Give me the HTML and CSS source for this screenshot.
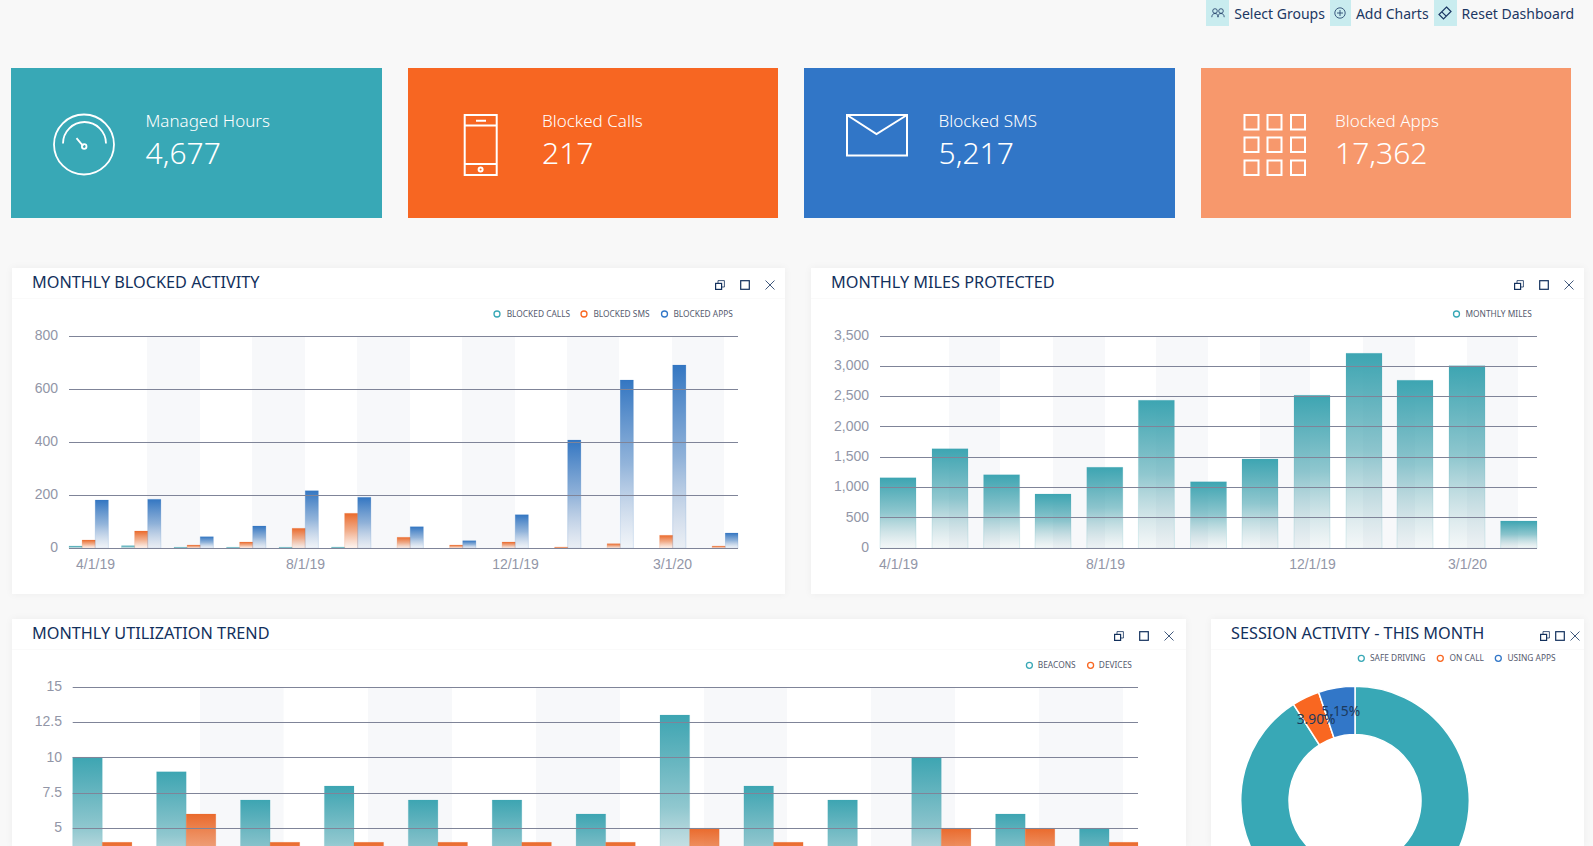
FILE: index.html
```html
<!DOCTYPE html>
<html lang="en">
<head>
<meta charset="utf-8">
<title>Dashboard</title>
<link rel="stylesheet" href="styles.css">
</head>
<body>
<main class="dash">
  <nav class="toolbar">
    <a class="tool"><span class="tool-ico wide"><svg viewBox="0 0 14 10" width="14" height="10"><circle cx="4" cy="3" r="2.3"/><circle cx="10" cy="3" r="2.3"/><path d="M.8 9.2c0-2.4 1.4-3.7 3.2-3.7s3.200 1.300 3.200 3.700M6.800 9.200c0-2.400 1.400-3.700 3.200-3.700s3.200 1.300 3.200 3.700"/></svg></span><span class="tool-label">Select Groups</span></a>
    <a class="tool"><span class="tool-ico"><svg viewBox="0 0 12 12" width="12" height="12"><circle cx="6" cy="6" r="5.2"/><path d="M6 3v6M3 6h6"/></svg></span><span class="tool-label">Add Charts</span></a>
    <a class="tool"><span class="tool-ico wide"><svg viewBox="0 0 14 14" width="14" height="14" class="strong"><path d="M8.500 1 13 5.500 5.500 13 1 8.500ZM3.800 5.800 8.200 10.200"/></svg></span><span class="tool-label">Reset Dashboard</span></a>
  </nav>

  <section class="cards">
    <article class="card teal">
      <svg class="card-ico" viewBox="0 0 62 62" width="62" height="62"><circle cx="31" cy="30.500" r="30"/><path d="M10 29.500A21.500 21.500 0 0 1 53 29.500M23.500 24.200 30.200 32.200"/><circle cx="31.200" cy="32.500" r="2.300"/></svg>
      <div class="card-text"><div class="card-label">Managed Hours</div><div class="card-value">4,677</div></div>
    </article>
    <article class="card orange">
      <svg class="card-ico" viewBox="0 0 62 62" width="62" height="62"><rect x="14.700" y="1" width="32" height="60"/><path d="M14.700 11.500H46.700M14.700 50H46.700M26 6.800H36"/><circle cx="30.600" cy="55.500" r="2"/></svg>
      <div class="card-text"><div class="card-label">Blocked Calls</div><div class="card-value">217</div></div>
    </article>
    <article class="card blue">
      <svg class="card-ico" viewBox="0 0 62 62" width="62" height="62"><rect x="1" y="1" width="60" height="40.500"/><path d="M1 1 30.500 20 61 1"/></svg>
      <div class="card-text"><div class="card-label">Blocked SMS</div><div class="card-value">5,217</div></div>
    </article>
    <article class="card peach">
      <svg class="card-ico" viewBox="0 0 62 62" width="62" height="62"><rect x="1.500" y="1" width="14" height="14.500"/><rect x="24.500" y="1" width="14" height="14.500"/><rect x="48" y="1" width="14" height="14.500"/><rect x="1.500" y="23.500" width="14" height="14.500"/><rect x="24.500" y="23.500" width="14" height="14.500"/><rect x="48" y="23.500" width="14" height="14.500"/><rect x="1.500" y="46.500" width="14" height="14.500"/><rect x="24.500" y="46.500" width="14" height="14.500"/><rect x="48" y="46.500" width="14" height="14.500"/></svg>
      <div class="card-text"><div class="card-label">Blocked Apps</div><div class="card-value">17,362</div></div>
    </article>
  </section>

  <section class="row-two">
    <article class="panel">
      <header class="panel-head">
        <h2>MONTHLY BLOCKED ACTIVITY</h2>
        <div class="actions">
          <svg viewBox="0 0 10 10" width="10" height="10"><rect x=".6" y="3.400" width="6" height="6"/><path class="thin" d="M3 3.400V.6H9.400V7H6.600"/></svg>
          <svg viewBox="0 0 10 10" width="10" height="10"><rect x=".7" y=".7" width="8.600" height="8.600"/></svg>
          <svg viewBox="0 0 10 10" width="10" height="10"><path class="thin" d="M.5.5 9.500 9.500M9.500.5.500 9.500"/></svg>
        </div>
      </header>
      <svg class="chart" viewBox="12 299 773 295" width="773" height="295">
        <defs>
          <linearGradient id="gT" x1="0" y1="0" x2="0" y2="1"><stop offset="0" stop-color="#3da5b2"/><stop offset=".5" stop-color="#3f9fac" stop-opacity=".58"/><stop offset="1" stop-color="#8fb4bd" stop-opacity=".1"/></linearGradient>
          <linearGradient id="gO" x1="0" y1="0" x2="0" y2="1"><stop offset="0" stop-color="#ea6a2c"/><stop offset=".5" stop-color="#e9783f" stop-opacity=".6"/><stop offset="1" stop-color="#ea8a5c" stop-opacity=".08"/></linearGradient>
          <linearGradient id="gB" x1="0" y1="0" x2="0" y2="1"><stop offset="0" stop-color="#3376c2"/><stop offset=".5" stop-color="#4a82c2" stop-opacity=".6"/><stop offset="1" stop-color="#8aa6cc" stop-opacity=".12"/></linearGradient>
        </defs>
        <g class="bands"><rect x="147" y="336" width="53" height="212"/><rect x="252" y="336" width="53" height="212"/><rect x="357" y="336" width="53" height="212"/><rect x="462" y="336" width="53" height="212"/><rect x="567" y="336" width="52" height="212"/><rect x="672" y="336" width="52" height="212"/></g>
        <g class="bars teal-edge" fill="url(#gT)">
          <path d="M69 546V548.300H82.100V546Z"/><path d="M121.500 545.700V548.300H134.600V545.700Z"/><path d="M174 547.300V548.300H187.100V547.300Z"/><path d="M226.500 547.300V548.300H239.600V547.300Z"/><path d="M279 547.300V548.300H292.100V547.300Z"/><path d="M331.500 547V548.300H344.600V547Z"/>
        </g>
        <g class="bars orange-edge" fill="url(#gO)">
          <path d="M82.100 540V548.300H95.200V540Z"/><path d="M134.600 531V548.300H147.700V531Z"/><path d="M187.100 545V548.300H200.200V545Z"/><path d="M239.600 542V548.300H252.700V542Z"/><path d="M292.100 528.300V548.300H305.200V528.300Z"/><path d="M344.600 513.300V548.300H357.700V513.300Z"/><path d="M397.100 537.300V548.300H410.200V537.300Z"/><path d="M449.600 545V548.300H462.700V545Z"/><path d="M502.100 542V548.300H515.200V542Z"/><path d="M554.600 547V548.300H567.700V547Z"/><path d="M607.100 543.700V548.300H620.200V543.700Z"/><path d="M659.600 535.300V548.300H672.700V535.300Z"/><path d="M712.100 546V548.300H725.200V546Z"/>
        </g>
        <g class="bars blue-edge" fill="url(#gB)">
          <path d="M95.200 500V548.300H108.400V500Z"/><path d="M147.700 499.300V548.300H160.900V499.300Z"/><path d="M200.200 536.700V548.300H213.400V536.700Z"/><path d="M252.700 526V548.300H265.900V526Z"/><path d="M305.200 490.700V548.300H318.400V490.700Z"/><path d="M357.700 497.300V548.300H370.900V497.300Z"/><path d="M410.200 526.700V548.300H423.400V526.700Z"/><path d="M462.700 540.700V548.300H475.900V540.700Z"/><path d="M515.200 514.700V548.300H528.400V514.700Z"/><path d="M567.700 440V548.300H580.900V440Z"/><path d="M620.200 380V548.300H633.400V380Z"/><path d="M672.700 365V548.300H685.900V365Z"/><path d="M725.200 533V548.300H738V533Z"/>
        </g>
        <g class="grid"><path d="M69 336.500H738M69 389.500H738M69 442.500H738M69 495.500H738M69 548.500H738"/></g>
        <g class="axis end"><text x="58" y="340">800</text><text x="58" y="393">600</text><text x="58" y="446">400</text><text x="58" y="499">200</text><text x="58" y="552">0</text></g>
        <g class="axis mid"><text x="95.500" y="569">4/1/19</text><text x="305.500" y="569">8/1/19</text><text x="515.500" y="569">12/1/19</text><text x="672.500" y="569">3/1/20</text></g>
        <g class="legend">
          <circle class="c-teal" cx="497" cy="314" r="3"/><text x="506.700" y="317">BLOCKED CALLS</text>
          <circle class="c-orange" cx="584" cy="314" r="3"/><text x="593.400" y="317">BLOCKED SMS</text>
          <circle class="c-blue" cx="664.500" cy="314" r="3"/><text x="673.400" y="317">BLOCKED APPS</text>
        </g>
      </svg>
    </article>

    <article class="panel">
      <header class="panel-head">
        <h2>MONTHLY MILES PROTECTED</h2>
        <div class="actions">
          <svg viewBox="0 0 10 10" width="10" height="10"><rect x=".6" y="3.400" width="6" height="6"/><path class="thin" d="M3 3.400V.6H9.400V7H6.600"/></svg>
          <svg viewBox="0 0 10 10" width="10" height="10"><rect x=".7" y=".7" width="8.600" height="8.600"/></svg>
          <svg viewBox="0 0 10 10" width="10" height="10"><path class="thin" d="M.5.5 9.500 9.500M9.500.5.500 9.500"/></svg>
        </div>
      </header>
      <svg class="chart" viewBox="811 299 773 295" width="773" height="295">
        <g class="bands"><rect x="949" y="336" width="51" height="212"/><rect x="1053" y="336" width="52" height="212"/><rect x="1156" y="336" width="52" height="212"/><rect x="1260" y="336" width="50" height="212"/><rect x="1363" y="336" width="52" height="212"/><rect x="1467" y="336" width="51" height="212"/></g>
        <g class="bars teal-edge" fill="url(#gT)">
          <path d="M880 477.700V548.300H916V477.700Z"/><path d="M932 448.700V548.300H968V448.700Z"/><path d="M983.600 474.700V548.300H1019.600V474.700Z"/><path d="M1035 494V548.300H1071V494Z"/><path d="M1086.800 467.300V548.300H1122.800V467.300Z"/><path d="M1138.400 400.300V548.300H1174.400V400.300Z"/><path d="M1190.500 481.700V548.300H1226.500V481.700Z"/><path d="M1242 459V548.300H1278V459Z"/><path d="M1294 395.300V548.300H1330V395.300Z"/><path d="M1346 353.300V548.300H1382V353.300Z"/><path d="M1397 380.300V548.300H1433V380.300Z"/><path d="M1449 365.700V548.300H1485V365.700Z"/><path d="M1500.600 521V548.300H1537V521Z"/>
        </g>
        <g class="grid"><path d="M880 336.500H1537M880 366.500H1537M880 396.500H1537M880 426.500H1537M880 457.500H1537M880 487.500H1537M880 517.500H1537M880 548.500H1537"/></g>
        <g class="axis end"><text x="869" y="340">3,500</text><text x="869" y="370">3,000</text><text x="869" y="400">2,500</text><text x="869" y="431">2,000</text><text x="869" y="461">1,500</text><text x="869" y="491">1,000</text><text x="869" y="522">500</text><text x="869" y="552">0</text></g>
        <g class="axis mid"><text x="898.500" y="569">4/1/19</text><text x="1105.500" y="569">8/1/19</text><text x="1312.500" y="569">12/1/19</text><text x="1467.500" y="569">3/1/20</text></g>
        <g class="legend"><circle class="c-teal" cx="1456.500" cy="314" r="3"/><text x="1465.500" y="317">MONTHLY MILES</text></g>
      </svg>
    </article>
  </section>

  <section class="row-three">
    <article class="panel trend">
      <header class="panel-head">
        <h2>MONTHLY UTILIZATION TREND</h2>
        <div class="actions">
          <svg viewBox="0 0 10 10" width="10" height="10"><rect x=".6" y="3.400" width="6" height="6"/><path class="thin" d="M3 3.400V.6H9.400V7H6.600"/></svg>
          <svg viewBox="0 0 10 10" width="10" height="10"><rect x=".7" y=".7" width="8.600" height="8.600"/></svg>
          <svg viewBox="0 0 10 10" width="10" height="10"><path class="thin" d="M.5.5 9.500 9.500M9.500.5.500 9.500"/></svg>
        </div>
      </header>
      <svg class="chart" viewBox="12 650 1173.500 196" width="1173.500" height="196">
        <g class="bands"><rect x="200" y="687" width="83.600" height="212"/><rect x="368" y="687" width="84" height="212"/><rect x="536" y="687" width="84" height="212"/><rect x="704" y="687" width="83" height="212"/><rect x="871" y="687" width="84" height="212"/><rect x="1039" y="687" width="84" height="212"/></g>
        <g class="bars teal-edge" fill="url(#gT)">
          <path d="M72.700 757.300V899H102.300V757.300Z"/><path d="M156.600 771.700V899H186.200V771.700Z"/><path d="M240.500 800V899H270.100V800Z"/><path d="M324.400 786V899H354V786Z"/><path d="M408.300 800V899H437.900V800Z"/><path d="M492.200 800V899H521.800V800Z"/><path d="M576.100 814V899H605.700V814Z"/><path d="M660 715V899H689.600V715Z"/><path d="M743.900 786V899H773.500V786Z"/><path d="M827.800 800V899H857.400V800Z"/><path d="M911.700 757.300V899H941.300V757.300Z"/><path d="M995.600 814V899H1025.200V814Z"/><path d="M1079.500 828.300V899H1109.100V828.300Z"/>
        </g>
        <g class="bars orange-edge" fill="url(#gO)">
          <path d="M102.300 842.300V899H131.900V842.300Z"/><path d="M186.200 814V899H215.800V814Z"/><path d="M270.100 842.300V899H299.700V842.300Z"/><path d="M354 842.300V899H383.600V842.300Z"/><path d="M437.900 842.300V899H467.500V842.300Z"/><path d="M521.800 842.300V899H551.400V842.300Z"/><path d="M605.700 842.300V899H635.300V842.300Z"/><path d="M689.600 828.300V899H719.200V828.300Z"/><path d="M773.500 842.300V899H803.100V842.300Z"/><path d="M941.300 828.300V899H970.900V828.300Z"/><path d="M1025.200 828.300V899H1054.800V828.300Z"/><path d="M1109.100 842.300V899H1138V842.300Z"/>
        </g>
        <g class="grid"><path d="M72.700 687.500H1138M72.700 722.500H1138M72.700 757.500H1138M72.700 793.500H1138M72.700 828.500H1138"/></g>
        <g class="axis end"><text x="62" y="691">15</text><text x="62" y="726">12.5</text><text x="62" y="762">10</text><text x="62" y="797">7.5</text><text x="62" y="832">5</text></g>
        <g class="legend">
          <circle class="c-teal" cx="1029.400" cy="665.300" r="3"/><text x="1037.800" y="668.300">BEACONS</text>
          <circle class="c-orange" cx="1090.600" cy="665.300" r="3"/><text x="1098.800" y="668.300">DEVICES</text>
        </g>
      </svg>
    </article>

    <article class="panel compact">
      <header class="panel-head">
        <h2>SESSION ACTIVITY - THIS MONTH</h2>
        <div class="actions">
          <svg viewBox="0 0 10 10" width="10" height="10"><rect x=".6" y="3.400" width="6" height="6"/><path class="thin" d="M3 3.400V.6H9.400V7H6.600"/></svg>
          <svg viewBox="0 0 10 10" width="10" height="10"><rect x=".7" y=".7" width="8.600" height="8.600"/></svg>
          <svg viewBox="0 0 10 10" width="10" height="10"><path class="thin" d="M.5.5 9.500 9.500M9.500.5.500 9.500"/></svg>
        </div>
      </header>
      <svg class="chart" viewBox="1211 650 373 196" width="373" height="196">
        <g class="legend">
          <circle class="c-teal" cx="1361.300" cy="658.300" r="3"/><text x="1370" y="661.300">SAFE DRIVING</text>
          <circle class="c-orange" cx="1440.300" cy="658.300" r="3"/><text x="1449.500" y="661.300">ON CALL</text>
          <circle class="c-blue" cx="1498.300" cy="658.300" r="3"/><text x="1507.500" y="661.300">USING APPS</text>
        </g>
        <g class="slices">
          <path class="s-teal" d="M1355 686.300A114.300 114.300 0 1 1 1293.450 704.300L1319.460 745A66 66 0 1 0 1355 734.600Z"/>
          <path class="s-orange" d="M1293.450 704.300A114.300 114.300 0 0 1 1318.650 692.240L1334.020 738.030A66 66 0 0 0 1319.460 745Z"/>
          <path class="s-blue" d="M1318.650 692.240A114.300 114.300 0 0 1 1355 686.300L1355 734.600A66 66 0 0 0 1334.020 738.030Z"/>
        </g>
        <g class="pie-label"><text x="1321.300" y="716">5.15%</text><text x="1296.700" y="724">3.90%</text></g>
      </svg>
    </article>
  </section>
</main>
</body>
</html>
```

FILE: styles.css
```css
* { box-sizing: border-box; }
html, body { margin: 0; height: 846px; overflow: hidden; }
body { background: #f8f8f8; font-family: "Noto Sans", "Open Sans", sans-serif; color: #1b3763; }

.dash { display: flex; flex-direction: column; height: 846px; }

.toolbar { display: flex; justify-content: flex-end; height: 26px; padding-right: 19px; gap: 5px; }
.tool { display: flex; align-items: center; gap: 5px; font-size: 14px; color: #1b3763; }
.tool-ico { display: flex; align-items: center; justify-content: center; width: 21px; height: 26px; background: #c9ecef; }
.tool-ico.wide { width: 23px; }
.tool-ico svg { fill: none; stroke: #1b3763; stroke-width: .8; margin-bottom: 1px; }
.tool-ico svg.strong { stroke-width: 1.2; }

.cards { display: grid; grid-template-columns: repeat(4, 370.500px); justify-content: space-between; margin: 42px 22px 0 11px; }
.card { display: flex; align-items: flex-start; height: 150px; padding: 46px 0 0 42px; color: #fff; }
.card.teal { background: #38a8b6; }
.card.orange { background: #f76622; }
.card.blue { background: #3176c7; }
.card.peach { background: #f7986c; }
.card-ico { flex: none; overflow: visible; fill: none; stroke: #fff; stroke-width: 2; }
.card.teal .card-ico { stroke-width: 1.800; }
.card-text { margin-left: 30.500px; margin-top: -6px; font-weight: 300; }
.card-label { font-size: 17px; line-height: 25px; }
.card-value { font-size: 30px; line-height: 40px; }

.row-two { display: grid; grid-template-columns: 773px 773px; gap: 26px; margin: 50px 0 0 12px; }
.row-three { display: grid; grid-template-columns: 1173.500px 373px; gap: 25.500px; margin: 25px 0 0 12px; flex: 1; min-height: 0; }

.panel { background: #fff; box-shadow: 0 0 8px rgba(0, 0, 0, .05); min-width: 0; }
.panel-head { display: flex; justify-content: space-between; align-items: flex-start; height: 31px; padding: 0 10px 0 20px; border-bottom: 1px solid #fafafa; }
.panel-head h2 { margin: 0; font-size: 16.250px; font-weight: 400; line-height: 29px; color: #12305c; white-space: nowrap; }
.actions { display: flex; gap: 15px; margin-top: 12px; }
.actions svg { fill: none; stroke: #12305c; stroke-width: 1.200; }
.actions .thin { stroke-width: .8; }
.trend .panel-head { padding-right: 11.500px; }
.compact .panel-head { padding-right: 4px; }
.compact .actions { gap: 5px; }

.chart { display: block; }
.bands rect { fill: #f7f8fa; }
.bars path { stroke-width: 1; stroke-opacity: .16; }
.teal-edge path { stroke: #3da5b2; }
.orange-edge path { stroke: #ea6a2c; }
.blue-edge path { stroke: #3376c2; }
.grid path { fill: none; stroke: #7f8498; stroke-width: 1; }
.axis text { font-family: "Liberation Sans", Arial, sans-serif; font-size: 14px; fill: #9296a7; }
.axis.end text { text-anchor: end; }
.axis.mid text { text-anchor: middle; }
.legend text { font-family: "Noto Sans", sans-serif; font-size: 8.350px; fill: #555a6e; }
.legend circle { fill: #fff; stroke-width: 1.300; }
.c-teal { stroke: #38a8b6; }
.c-orange { stroke: #f96721; }
.c-blue { stroke: #3277c8; }
.slices path { stroke: #fff; stroke-width: 1.500; }
.s-teal { fill: #38a8b6; }
.s-orange { fill: #f96721; }
.s-blue { fill: #3277c8; }
.pie-label text { font-family: "Noto Sans", sans-serif; font-size: 13.800px; fill: #1c3a5e; }
```
